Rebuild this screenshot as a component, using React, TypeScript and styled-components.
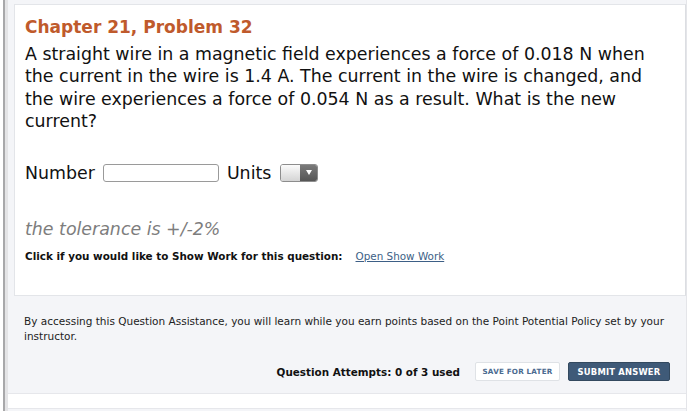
import React from "react";
import styled, { createGlobalStyle } from "styled-components";

const Global = createGlobalStyle`
  html, body {
    margin: 0;
    padding: 0;
    background: #ffffff;
  }
  body {
    font-family: "DejaVu Sans", Verdana, sans-serif;
    color: #111;
  }
`;

const Frame = styled.div`
  width: 692px;
  height: 411px;
  box-sizing: border-box;
  display: flex;
  padding-left: 3px;
  overflow: hidden;
`;

const Rail = styled.div`
  width: 2px;
  background: #a8a8aa;
  border-right: 3px solid #e4e4e6;
`;

const Main = styled.div`
  flex: 1;
  display: flex;
  flex-direction: column;
  background: #f4f5f8;
  border-right: 1px solid #e4e5e9;
  margin-right: 5px;
`;

const Panel = styled.div`
  margin: 4px 0 0 6px;
  background: #fff;
  border: 1px solid #e3e5e9;
  border-right: 1px solid #dcdee2;
  padding: 11px 10px 0 10px;
  height: 292px;
  box-sizing: border-box;
`;

const Title = styled.h2`
  margin: 0;
  font-size: 17px;
  font-weight: bold;
  color: #bf5a2c;
  line-height: 22px;
`;

const Prompt = styled.p`
  margin: 5px 0 0;
  max-width: 650px;
  font-size: 17.4px;
  line-height: 22.4px;
`;

const AnswerRow = styled.div`
  display: flex;
  align-items: center;
  margin-top: 29px;
  font-size: 17.4px;
  height: 22px;
`;

const NumberInput = styled.input`
  width: 116px;
  height: 18px;
  box-sizing: border-box;
  margin: 0 8px 0 8px;
  border: 1px solid #9a9a9a;
  border-radius: 3px;
  background: #fff;
  padding: 0;
`;

const UnitsSelect = styled.div`
  display: flex;
  width: 36px;
  height: 16px;
  margin-left: 9px;
  border: 1px solid #8d8d8d;
  border-radius: 3px;
  overflow: hidden;
`;

const SelectFace = styled.div`
  flex: 1;
  background: linear-gradient(#fbfbfb, #d4d4d4);
`;

const SelectArrow = styled.div`
  width: 17px;
  background: linear-gradient(#7a7a7a, #555);
  display: flex;
  align-items: center;
  justify-content: center;
  &::after {
    content: "";
    border-left: 3.5px solid transparent;
    border-right: 3.5px solid transparent;
    border-top: 5px solid #fff;
  }
`;

const Tolerance = styled.div`
  margin-top: 35px;
  font-size: 17.4px;
  font-style: italic;
  color: #7d7d7d;
`;

const ShowWork = styled.div`
  margin-top: 11px;
  font-size: 10.4px;
  font-weight: bold;
  display: flex;
  gap: 13px;
`;

const ShowWorkLink = styled.a`
  font-weight: normal;
  color: #3d5f86;
  text-decoration: underline;
`;

const Assist = styled.div`
  padding: 18px 16px 0 10px;
  height: 97px;
  box-sizing: border-box;
`;

const Notice = styled.p`
  margin: 0 0 0 6px;
  font-size: 10.5px;
  line-height: 15px;
  color: #222;
`;

const Actions = styled.div`
  display: flex;
  justify-content: flex-end;
  align-items: center;
  margin-top: 18px;
`;

const Attempts = styled.span`
  font-size: 10.4px;
  font-weight: bold;
  margin-right: 15px;
  white-space: nowrap;
`;

const Button = styled.button<{ $primary?: boolean }>`
  font-family: "DejaVu Sans", Verdana, sans-serif;
  font-weight: bold;
  height: 19px;
  padding: 0;
  border-radius: 2px;
  white-space: nowrap;
  font-size: ${(p) => (p.$primary ? "8.4px" : "7.2px")};
  letter-spacing: 0.2px;
  color: ${(p) => (p.$primary ? "#fff" : "#4a6a8f")};
  background: ${(p) => (p.$primary ? "#3f5a78" : "#fff")};
  border: 1px solid ${(p) => (p.$primary ? "#33495f" : "#dfe2e6")};
  margin-left: ${(p) => (p.$primary ? "8px" : "0")};
  width: ${(p) => (p.$primary ? "102px" : "85px")};
`;

const Footer = styled.div`
  height: 14px;
  background: #fff;
  border-top: 1px solid #e6e7eb;
  border-bottom: 1px solid #e6e7eb;
`;

export default function App() {
  return (
    <>
      <Global />
      <Frame>
        <Rail />
        <Main>
          <Panel>
            <Title>Chapter 21, Problem 32</Title>
            <Prompt>
              A straight wire in a magnetic field experiences a force of 0.018 N when the
              current in the wire is 1.4 A. The current in the wire is changed, and the wire
              experiences a force of 0.054 N as a result. What is the new current?
            </Prompt>
            <AnswerRow>
              Number
              <NumberInput />
              Units
              <UnitsSelect>
                <SelectFace />
                <SelectArrow />
              </UnitsSelect>
            </AnswerRow>
            <Tolerance>the tolerance is +/-2%</Tolerance>
            <ShowWork>
              Click if you would like to Show Work for this question:
              <ShowWorkLink>Open Show Work</ShowWorkLink>
            </ShowWork>
          </Panel>
          <Assist>
            <Notice>
              By accessing this Question Assistance, you will learn while you earn points based
              on the Point Potential Policy set by your instructor.
            </Notice>
            <Actions>
              <Attempts>Question Attempts: 0 of 3 used</Attempts>
              <Button>SAVE FOR LATER</Button>
              <Button $primary>SUBMIT ANSWER</Button>
            </Actions>
          </Assist>
          <Footer />
        </Main>
      </Frame>
    </>
  );
}
